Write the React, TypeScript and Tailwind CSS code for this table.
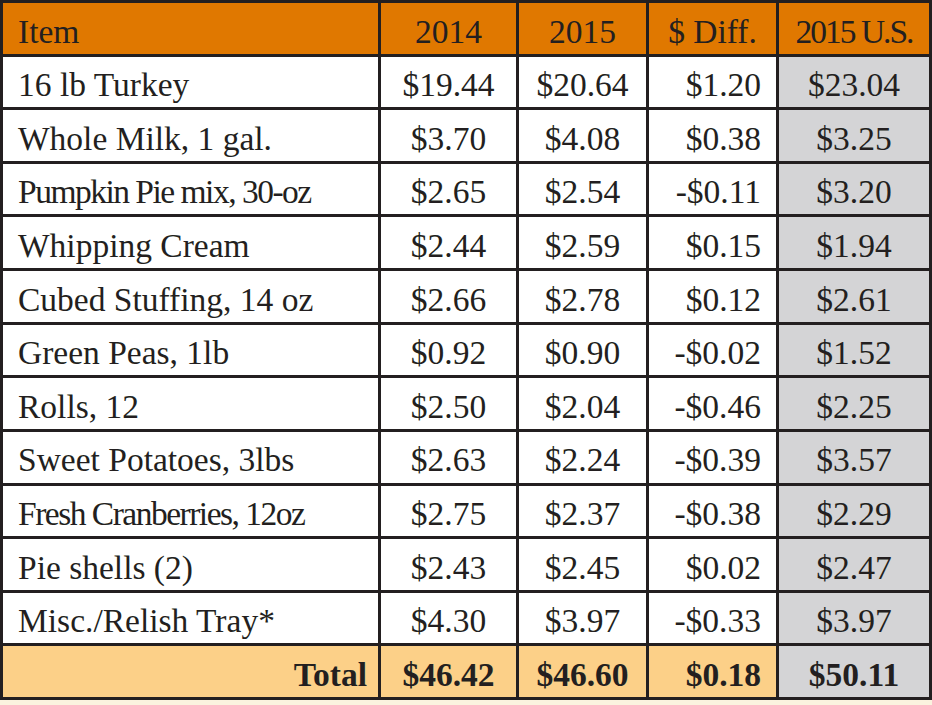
const rows: { item: string; y14: string; y15: string; diff: string; us: string; tight?: string }[] = [
  { item: '16 lb Turkey', y14: '$19.44', y15: '$20.64', diff: '$1.20', us: '$23.04' },
  { item: 'Whole Milk, 1 gal.', y14: '$3.70', y15: '$4.08', diff: '$0.38', us: '$3.25' },
  { item: 'Pumpkin Pie mix, 30-oz', y14: '$2.65', y15: '$2.54', diff: '-$0.11', us: '$3.20', tight: 'tracking-[-1.5px]' },
  { item: 'Whipping Cream', y14: '$2.44', y15: '$2.59', diff: '$0.15', us: '$1.94' },
  { item: 'Cubed Stuffing, 14 oz', y14: '$2.66', y15: '$2.78', diff: '$0.12', us: '$2.61' },
  { item: 'Green Peas, 1lb', y14: '$0.92', y15: '$0.90', diff: '-$0.02', us: '$1.52' },
  { item: 'Rolls, 12', y14: '$2.50', y15: '$2.04', diff: '-$0.46', us: '$2.25' },
  { item: 'Sweet Potatoes, 3lbs', y14: '$2.63', y15: '$2.24', diff: '-$0.39', us: '$3.57' },
  { item: 'Fresh Cranberries, 12oz', y14: '$2.75', y15: '$2.37', diff: '-$0.38', us: '$2.29', tight: 'tracking-[-1.5px]' },
  { item: 'Pie shells (2)', y14: '$2.43', y15: '$2.45', diff: '$0.02', us: '$2.47' },
  { item: 'Misc./Relish Tray*', y14: '$4.30', y15: '$3.97', diff: '-$0.33', us: '$3.97' },
];

export default function App() {
  return (
    <div className="w-[932px] h-[705px] bg-[#fbf3df] text-[#231f20] font-['Liberation_Serif',_'Times_New_Roman',_serif] text-[33.5px] leading-none">
      <div className="grid h-[700px] grid-cols-[375px_135px_127px_127px_150px] grid-rows-[repeat(13,1fr)] gap-[3px] p-[3px] bg-[#231f20]">
        {/* header */}
        <div className="bg-[#e07800] flex items-center pt-[6px] pl-[15px]">Item</div>
        <div className="bg-[#e07800] flex items-center pt-[6px] justify-center">2014</div>
        <div className="bg-[#e07800] flex items-center pt-[6px] justify-center">2015</div>
        <div className="bg-[#e07800] flex items-center pt-[6px] justify-center">$ Diff.</div>
        <div className="bg-[#e07800] flex items-center pt-[6px] justify-center tracking-[-2px]">2015 U.S.</div>

        {rows.map((r) => (
          <div key={r.item} className="contents">
            <div className={`bg-white flex items-center pt-[6px] pl-[15px] whitespace-nowrap ${r.tight ?? ''}`}>{r.item}</div>
            <div className="bg-white flex items-center pt-[6px] justify-center">{r.y14}</div>
            <div className="bg-white flex items-center pt-[6px] justify-center">{r.y15}</div>
            <div className="bg-white flex items-center pt-[6px] justify-end pr-[15px]">{r.diff}</div>
            <div className="bg-[#d4d4d6] flex items-center pt-[6px] justify-center">{r.us}</div>
          </div>
        ))}

        {/* total */}
        <div className="bg-[#fcd088] flex items-center pt-[6px] justify-end pr-[11px] font-bold">Total</div>
        <div className="bg-[#fcd088] flex items-center pt-[6px] justify-center font-bold">$46.42</div>
        <div className="bg-[#fcd088] flex items-center pt-[6px] justify-center font-bold">$46.60</div>
        <div className="bg-[#fcd088] flex items-center pt-[6px] justify-end pr-[15px] font-bold">$0.18</div>
        <div className="bg-[#d4d4d6] flex items-center pt-[6px] justify-center font-bold">$50.11</div>
      </div>
    </div>
  );
}
